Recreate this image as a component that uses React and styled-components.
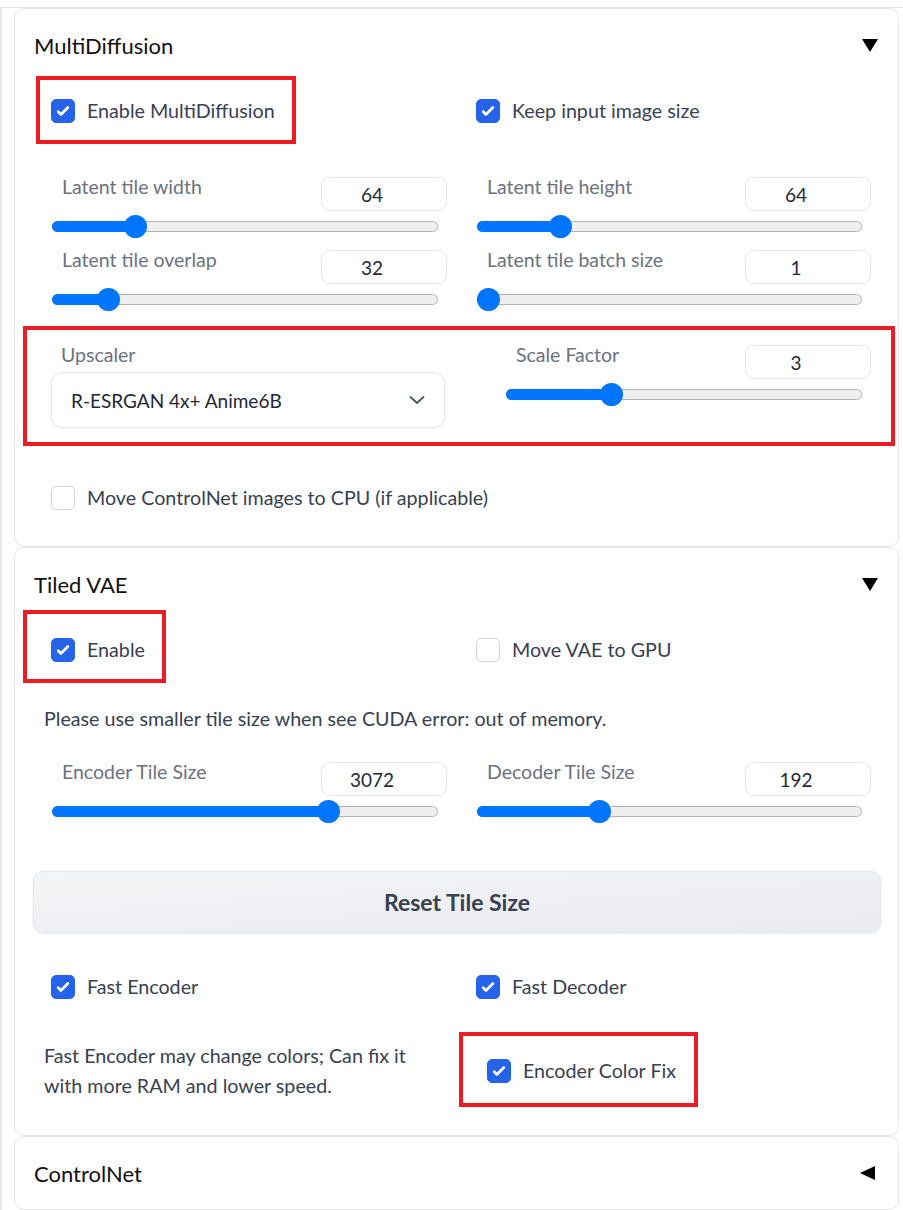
import React from 'react';
import styled, { createGlobalStyle } from 'styled-components';

const GlobalStyle = createGlobalStyle`
  html, body { margin: 0; padding: 0; background: #fff; }
  body { font-family: Lato, "Liberation Sans", sans-serif; padding-top: 7px; }
  *, *::before, *::after { box-sizing: border-box; }
`;

const Page = styled.div`
  border-left: 2px solid #e5e7eb;
  border-top: 1px solid #e5e7eb;
  padding: 0 4px 0 12px;
  min-height: 1210px;
`;

const Panel = styled.section`
  border: 1px solid #e5e7eb;
  border-radius: 10px;
  background: #fff;
  padding: 0 18px ${p => p.$pb || 0}px;
`;

const Header = styled.div`
  height: 72px;
  display: flex;
  align-items: center;
  justify-content: space-between;
  padding: 0 ${p => p.$pr}px 0 1px;
`;

const Title = styled.h2`
  margin: 0;
  font-size: 22px;
  font-weight: 400;
  color: #111;
`;

const TriDown = styled.span`
  width: 0;
  height: 0;
  border-left: 8px solid transparent;
  border-right: 8px solid transparent;
  border-top: 13px solid #000;
`;

const TriLeft = styled.span`
  width: 0;
  height: 0;
  border-top: 7.5px solid transparent;
  border-bottom: 7.5px solid transparent;
  border-right: 15px solid #000;
`;

const Grid = styled.div`
  display: grid;
  grid-template-columns: 424px 1fr;
  margin-top: ${p => p.$mt || 0}px;
`;

const Cell = styled.div`
  position: relative;
  display: flex;
  align-items: ${p => p.$align || 'center'};
  height: ${p => (p.$h ? `${p.$h}px` : 'auto')};
  padding: ${p => p.$pad || '0 0 0 18px'};
`;

const CheckItem = styled.label`
  display: inline-flex;
  align-items: center;
  gap: 12px;
  font-size: 19.7px;
  line-height: 24px;
  color: #374151;
`;

const Box = styled.span`
  width: 24px;
  height: 24px;
  border-radius: 5px;
  flex: none;
  display: flex;
  align-items: center;
  justify-content: center;
  background: ${p => (p.$checked ? '#2563eb' : '#fff')};
  border: 1px solid ${p => (p.$checked ? '#2563eb' : '#d1d5db')};
`;

const Highlight = styled.span`
  position: absolute;
  pointer-events: none;
  border: 4px solid #ed1c24;
  left: ${p => p.$l}px;
  top: ${p => p.$t}px;
  width: ${p => p.$w}px;
  height: ${p => p.$h}px;
`;

const SliderBlock = styled.div`
  height: 73px;
  padding: 0 ${p => p.$pr ?? 10}px 0 ${p => p.$pl ?? 19}px;
`;

const SliderHead = styled.div`
  display: flex;
  justify-content: space-between;
  align-items: flex-start;
  height: 34px;
`;

const FieldLabel = styled.span`
  display: block;
  font-size: 19.5px;
  line-height: 24px;
  color: #6b7280;
  padding-left: 10px;
  margin-top: ${p => p.$mt ?? -2}px;
`;

const NumBox = styled.div`
  width: 126px;
  height: 34px;
  border: 1px solid #e5e7eb;
  border-radius: 9px;
  display: flex;
  align-items: center;
  justify-content: center;
  padding-right: 24px;
  font-size: 19px;
  color: #1f2937;
  box-shadow: 0 1px 2px rgba(0, 0, 0, 0.03);
`;

const Track = styled.div`
  position: relative;
  height: 11px;
  margin: 10px 9px 0 0;
  border-radius: 6px;
  background: #efefef;
  border: 1px solid #b2b2b2;
`;

const Fill = styled.div`
  position: absolute;
  left: -1px;
  top: -1px;
  bottom: -1px;
  border-radius: 6px;
  background: #0075ff;
`;

const Thumb = styled.div`
  position: absolute;
  top: 50%;
  width: 23px;
  height: 23px;
  margin-top: -11.5px;
  margin-left: -1px;
  border-radius: 50%;
  background: #0075ff;
`;

const UpscalerRow = styled.div`
  position: relative;
  display: grid;
  grid-template-columns: 424px 1fr;
  height: 120px;
  margin-top: 3px;
`;

const UpscalerCell = styled.div`
  padding: ${p => p.$pad};
`;

const Dropdown = styled.div`
  margin-top: 5px;
  height: 56px;
  border: 1px solid #e5e7eb;
  border-radius: 11px;
  display: flex;
  align-items: center;
  justify-content: space-between;
  padding: 0 19px 0 19px;
  font-size: 19px;
  color: #1f2937;
  box-shadow: 0 1px 2px rgba(0, 0, 0, 0.05);
`;

const CheckRow = styled.div`
  height: 60px;
  display: flex;
  align-items: center;
  padding-left: 18px;
  margin-top: ${p => p.$mt || 0}px;
`;

const Para = styled.p`
  margin: ${p => p.$m || 0};
  padding-left: 11px;
  font-size: 19.7px;
  line-height: 30px;
  color: #374151;
`;

const ResetButton = styled.button`
  display: block;
  width: calc(100% + 1px);
  height: 62px;
  margin-top: 36px;
  border: 1px solid #e5e7eb;
  border-radius: 10px;
  background: linear-gradient(to bottom right, #f4f5f7, #eaebef);
  font-family: Lato, "Liberation Sans", sans-serif;
  font-weight: 700;
  font-size: 23px;
  color: #374151;
  box-shadow: 0 1px 3px rgba(0, 0, 0, 0.08);
`;

const Check = ({ checked, children }) => (
  <CheckItem>
    <Box $checked={checked}>
      {checked && (
        <svg width="24" height="24" viewBox="0 0 16 16" fill="#fff">
          <path d="M12.207 4.793a1 1 0 010 1.414l-5 5a1 1 0 01-1.414 0l-2-2a1 1 0 011.414-1.414L6.5 9.086l4.293-4.293a1 1 0 011.414 0z" />
        </svg>
      )}
    </Box>
    {children}
  </CheckItem>
);

const Slider = ({ label, value, frac, pl, pr }) => (
  <SliderBlock $pl={pl} $pr={pr}>
    <SliderHead>
      <FieldLabel>{label}</FieldLabel>
      <NumBox>{value}</NumBox>
    </SliderHead>
    <Track>
      <Fill style={{ width: `calc(${frac} * (100% - 23px) + 12.5px)` }} />
      <Thumb style={{ left: `calc(${frac} * (100% - 23px))` }} />
    </Track>
  </SliderBlock>
);

const Chevron = () => (
  <svg width="16" height="10" viewBox="0 0 16 10" fill="none" stroke="#4b5563" strokeWidth="1.8" strokeLinecap="round" strokeLinejoin="round">
    <polyline points="1.5,2 8,8 14.5,2" />
  </svg>
);

export default function App() {
  return (
    <>
      <GlobalStyle />
      <Page>
        <Panel $pb={18}>
          <Header $pr={2}>
            <Title>MultiDiffusion</Title>
            <TriDown />
          </Header>
          <Grid>
            <Cell $h={60}>
              <Check checked>Enable MultiDiffusion</Check>
              <Highlight $l={3} $t={-5} $w={260} $h={68} />
            </Cell>
            <Cell $h={60} $pad="0 0 0 19px">
              <Check checked>Keep input image size</Check>
            </Cell>
          </Grid>
          <Grid $mt={36}>
            <Slider label="Latent tile width" value="64" frac={0.2} />
            <Slider label="Latent tile height" value="64" frac={0.2} pl={20} pr={9} />
            <Slider label="Latent tile overlap" value="32" frac={0.124} />
            <Slider label="Latent tile batch size" value="1" frac={0} pl={20} pr={9} />
          </Grid>
          <UpscalerRow>
            <UpscalerCell $pad="17px 12px 0 18px">
              <FieldLabel $mt={0}>Upscaler</FieldLabel>
              <Dropdown>
                <span>R-ESRGAN 4x+ Anime6B</span>
                <Chevron />
              </Dropdown>
            </UpscalerCell>
            <UpscalerCell $pad="19px 0 0 0">
              <Slider label="Scale Factor" value="3" frac={0.285} pl={49} pr={9} />
            </UpscalerCell>
            <Highlight $l={-10} $t={0} $w={872} $h={120} />
          </UpscalerRow>
          <CheckRow $mt={22}>
            <Check>Move ControlNet images to CPU (if applicable)</Check>
          </CheckRow>
        </Panel>

        <Panel $pb={29}>
          <Header $pr={2}>
            <Title>Tiled VAE</Title>
            <TriDown />
          </Header>
          <Grid>
            <Cell $h={60}>
              <Check checked>Enable</Check>
              <Highlight $l={-10} $t={-10} $w={143} $h={73} />
            </Cell>
            <Cell $h={60} $pad="0 0 0 19px">
              <Check>Move VAE to GPU</Check>
            </Cell>
          </Grid>
          <Para $m="24px 0 0">Please use smaller tile size when see CUDA error: out of memory.</Para>
          <Grid $mt={28}>
            <Slider label="Encoder Tile Size" value="3072" frac={0.733} />
            <Slider label="Decoder Tile Size" value="192" frac={0.308} pl={20} pr={9} />
          </Grid>
          <ResetButton>Reset Tile Size</ResetButton>
          <Grid $mt={24}>
            <Cell $h={60}>
              <Check checked>Fast Encoder</Check>
            </Cell>
            <Cell $h={60} $pad="0 0 0 19px">
              <Check checked>Fast Decoder</Check>
            </Cell>
          </Grid>
          <Grid $mt={19}>
            <Cell $h={70} $align="flex-start" $pad="5px 0 0 0">
              <Para>
                Fast Encoder may change colors; Can fix it
                <br />
                with more RAM and lower speed.
              </Para>
            </Cell>
            <Cell $h={70} $pad="0 0 0 30px">
              <Check checked>Encoder Color Fix</Check>
              <Highlight $l={2} $t={-4} $w={239} $h={75} />
            </Cell>
          </Grid>
        </Panel>

        <Panel>
          <Header $pr={5}>
            <Title>ControlNet</Title>
            <TriLeft />
          </Header>
        </Panel>
      </Page>
    </>
  );
}
